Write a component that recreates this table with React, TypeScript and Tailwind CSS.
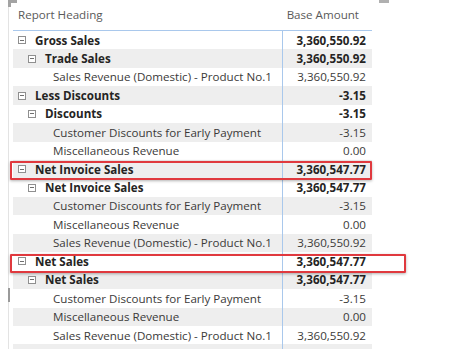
import React from "react";

type Row = {
    label: string;
    value: string;
    level: 0 | 1 | 2;
};

const rows: Row[] = [
    { label: "Gross Sales", value: "3,360,550.92", level: 0 },
    { label: "Trade Sales", value: "3,360,550.92", level: 1 },
    { label: "Sales Revenue (Domestic) - Product No.1", value: "3,360,550.92", level: 2 },
    { label: "Less Discounts", value: "-3.15", level: 0 },
    { label: "Discounts", value: "-3.15", level: 1 },
    { label: "Customer Discounts for Early Payment", value: "-3.15", level: 2 },
    { label: "Miscellaneous Revenue", value: "0.00", level: 2 },
    { label: "Net Invoice Sales", value: "3,360,547.77", level: 0 },
    { label: "Net Invoice Sales", value: "3,360,547.77", level: 1 },
    { label: "Customer Discounts for Early Payment", value: "-3.15", level: 2 },
    { label: "Miscellaneous Revenue", value: "0.00", level: 2 },
    { label: "Sales Revenue (Domestic) - Product No.1", value: "3,360,550.92", level: 2 },
    { label: "Net Sales", value: "3,360,547.77", level: 0 },
    { label: "Net Sales", value: "3,360,547.77", level: 1 },
    { label: "Customer Discounts for Early Payment", value: "-3.15", level: 2 },
    { label: "Miscellaneous Revenue", value: "0.00", level: 2 },
    { label: "Sales Revenue (Domestic) - Product No.1", value: "3,360,550.92", level: 2 },
];

function Collapse() {
    return (
        <span className="w-[8px] h-[8px] border border-[#8f8f8f] flex items-center justify-center shrink-0 bg-white">
            <span className="w-[4px] h-px bg-[#6f6f6f]" />
        </span>
    );
}

export default function App() {
    return (
        <div className="relative w-[474px] h-[349px] overflow-hidden bg-white font-['Open_Sans',sans-serif] text-[11.6px]">
            <div className="pl-[8px] h-full">
                <div className="h-full border-l border-[#e3e3e3] pl-[4px] w-[365px]">
                    <div className="w-[359px]">
                        {/* Header */}
                        <div className="flex h-[31px] border-b border-[#a9c8ec] text-[#5a5a5a]">
                            <div className="w-[269px] pl-[5px] flex items-center">Report Heading</div>
                            <div className="w-[90px] pr-[13px] flex items-center justify-end">Base Amount</div>
                        </div>

                        {/* Body */}
                        {rows.map((r, i) => (
                            <div
                                key={i}
                                className={`flex h-[18.45px] ${i % 2 === 1 ? "bg-[#eeeeee]" : "bg-white"}`}
                            >
                                <div
                                    className={`w-[269px] flex items-center whitespace-nowrap overflow-hidden ${
                                        r.level === 0
                                            ? "pl-[5px] font-bold text-[#252423]"
                                            : r.level === 1
                                            ? "pl-[15px] font-bold text-[#252423]"
                                            : "pl-[40px] text-[#3b3a39]"
                                    }`}
                                >
                                    {r.level < 2 && <Collapse />}
                                    <span className={r.level < 2 ? "ml-[9px]" : ""}>{r.label}</span>
                                </div>
                                <div
                                    className={`w-[90px] border-l border-[#a9c8ec] pr-[6px] flex items-center justify-end ${
                                        r.level < 2 ? "font-bold text-[#252423]" : "text-[#3b3a39]"
                                    }`}
                                >
                                    {r.value}
                                </div>
                            </div>
                        ))}
                        {/* next row peeking in at the bottom */}
                        <div className="flex h-[18px] bg-[#eeeeee]">
                            <div className="w-[269px]" />
                            <div className="w-[90px] border-l border-[#a9c8ec]" />
                        </div>
                    </div>
                </div>
            </div>

            {/* corner marks */}
            <div className="absolute left-[8px] top-0 w-[9px] h-[3px] bg-[#a3a3a3]" />
            <div className="absolute left-[8px] top-0 w-[3px] h-[7px] bg-[#a3a3a3]" />
            <div className="absolute left-[379px] top-0 w-[10px] h-[3px] bg-[#b0b0b0]" />
            <div className="absolute left-[8px] top-[288px] w-[2px] h-[14px] bg-[#9a9a9a]" />

            {/* highlight boxes */}
            <div className="absolute left-[10px] top-[161px] w-[362px] h-[19px] border-2 border-[#e0393e] rounded-[1px] shadow-[0_1px_3px_rgba(0,0,0,0.3)]" />
            <div className="absolute left-[10px] top-[254px] w-[396px] h-[19px] border-2 border-[#e0393e] rounded-[1px] shadow-[0_1px_3px_rgba(0,0,0,0.3)]" />
        </div>
    );
}
